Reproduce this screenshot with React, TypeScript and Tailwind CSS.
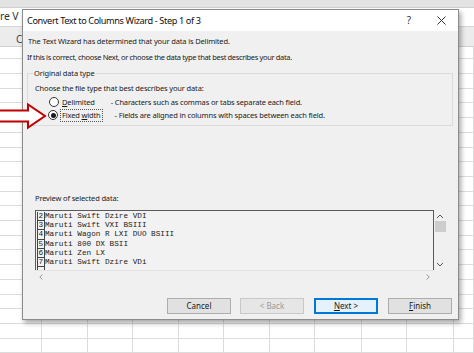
const rows = [
  { n: '2', t: 'Maruti Swift Dzire VDI' },
  { n: '3', t: 'Maruti Swift VXI BSIII' },
  { n: '4', t: 'Maruti Wagon R LXI DUO BSIII' },
  { n: '5', t: 'Maruti 800 DX BSII' },
  { n: '6', t: 'Maruti Zen LX' },
  { n: '7', t: 'Maruti Swift Dzire VDi' },
]

const colWidths = [43, 47, 46, 47, 46, 47, 46, 48, 46, 48, 20]

function Sheet() {
  return (
    <div className="flex flex-col w-[474px] h-[353px] bg-white font-['Noto_Sans',sans-serif]">
      <div className="h-[8px] bg-[#e3e3e3] border-b border-[#d0d0d0]" />
      <div className="h-[19px] flex items-center border-b border-[#d6d6d6]">
        <span className="whitespace-nowrap text-[10.5px] tracking-[-0.2px] text-[#333]">re V</span>
      </div>
      <div className="h-[20px] bg-[#ececec] border-b border-[#d0d0d0] flex items-end pl-[16px] text-[10px] leading-[13px] text-[#444]">C</div>
      <div className="flex-1 flex bg-[repeating-linear-gradient(to_bottom,transparent_0px,transparent_11.4px,#dcdcdc_11.4px,#dcdcdc_12.4px,transparent_12.4px,transparent_14.7px)]">
        {colWidths.map((w, i) => (
          <div key={i} className="h-full border-r border-[#dcdcdc]" style={{ width: w }} />
        ))}
      </div>
    </div>
  )
}

function Radio({ checked }: { checked?: boolean }) {
  return (
    <span className="w-[10px] h-[10px] rounded-full border border-[#333] bg-white flex items-center justify-center shrink-0">
      {checked && <span className="w-[5px] h-[5px] rounded-full bg-[#1a1a1a]" />}
    </span>
  )
}

function Btn({ children, cls }: { children: React.ReactNode; cls: string }) {
  return (
    <div className={`w-[64px] h-[16px] flex items-center justify-center text-[8px] ${cls}`}>{children}</div>
  )
}

function Dialog() {
  return (
    <div className="absolute left-[22px] top-[9px] w-[437px] h-[311px] border border-[#8c8c8c] bg-[#f0f0f0] shadow-[2px_3px_5px_rgba(0,0,0,0.35)] flex flex-col font-['Noto_Sans',sans-serif] text-[#1a1a1a]">
      <div className="h-[21px] bg-white flex items-center pl-[4px] pr-[10px]">
        <span className="text-[9.2px] tracking-[-0.4px] text-[#111]">Convert Text to Columns Wizard - Step 1 of 3</span>
        <span className="ml-auto text-[10px] text-[#333] mr-[26px]">?</span>
        <svg width="9" height="9" viewBox="0 0 9 9" className="mr-[2px]">
          <path d="M0.5 0.5 L8.5 8.5 M8.5 0.5 L0.5 8.5" stroke="#333" strokeWidth="1" />
        </svg>
      </div>
      <div className="flex flex-col pl-[4px] text-[7.5px] leading-[12px] tracking-[-0.15px]">
        <div className="mt-[4px] pl-[1px]">The Text Wizard has determined that your data is Delimited.</div>
        <div className="mt-[4px] tracking-[-0.35px]">If this is correct, choose Next, or choose the data type that best describes your data.</div>
        <div className="mt-[10px] w-[426px] h-[53px] border border-[#dcdcdc] flex flex-col">
          <div className="-mt-[7px] ml-[5px] px-[1px] bg-[#f0f0f0] self-start">Original data type</div>
          <div className="mt-[3px] ml-[7px]">Choose the file type that best describes your data:</div>
          <div className="mt-[1px] ml-[21px] flex items-center h-[13px] whitespace-nowrap">
            <Radio />
            <span className="ml-[3px]"><u>D</u>elimited</span>
            <span className="ml-[16px]">- Characters such as commas or tabs separate each field.</span>
          </div>
          <div className="ml-[20px] flex items-center h-[14px] whitespace-nowrap">
            <Radio checked />
            <span className="ml-[2px] px-[1px] border border-dotted border-[#555] leading-[11px]">Fixed <u>w</u>idth</span>
            <span className="ml-[12px]">- Fields are aligned in columns with spaces between each field.</span>
          </div>
        </div>
        <div className="mt-[66px] ml-[8px]">Preview of selected data:</div>
        <div className="mt-[6px] ml-[8px] w-[411px] h-[72px] flex flex-col">
          <div className="flex h-[60px]">
            <div className="w-[399px] border-t border-l border-r border-[#5a5a5a] bg-[#f2f2f2] flex pt-[1px] font-['Liberation_Mono',monospace] text-[7.7px] leading-[9.2px] tracking-normal text-[#222] overflow-hidden">
              <div className="ml-[1px] w-[8px] border-l border-r border-[#444] flex flex-col items-end">
                {rows.map((r) => (
                  <span key={r.n} className="pr-[1px] border-b border-[#444] h-[9.2px] leading-[8.6px]">{r.n}</span>
                ))}
              </div>
              <div className="flex flex-col">
                {rows.map((r) => (
                  <span key={r.n} className="whitespace-pre">{r.t}</span>
                ))}
              </div>
            </div>
            <div className="w-[12px] flex flex-col items-center">
              <svg width="8" height="5" viewBox="0 0 8 5" className="mt-[4px]">
                <path d="M1 4 L4 1 L7 4" stroke="#555" strokeWidth="1" fill="none" />
              </svg>
              <div className="mt-[2px] w-[11px] h-[11px] bg-[#cdcdcd]" />
              <svg width="8" height="5" viewBox="0 0 8 5" className="mt-auto mb-[3px]">
                <path d="M1 1 L4 4 L7 1" stroke="#555" strokeWidth="1" fill="none" />
              </svg>
            </div>
          </div>
          <div className="w-[399px] h-[12px] border-t border-[#e2e2e2] bg-[#f0f0f0] flex items-center justify-between px-[4px]">
            <svg width="4" height="6" viewBox="0 0 4 6"><path d="M3.5 0.5 L0.8 3 L3.5 5.5" stroke="#999" fill="none" /></svg>
            <svg width="4" height="6" viewBox="0 0 4 6"><path d="M0.5 0.5 L3.2 3 L0.5 5.5" stroke="#999" fill="none" /></svg>
          </div>
        </div>
        <div className="mt-[16px] flex gap-[10px] pl-[140px] tracking-normal">
          <Btn cls="border border-[#adadad] bg-[#e1e1e1]">Cancel</Btn>
          <Btn cls="border border-[#c8c8c8] bg-[#e6e6e6] text-[#9a9a9a] ml-[-1px]">&lt; Back</Btn>
          <Btn cls="border-2 border-[#0078d7] bg-[#e5f1fb]"><span><u>N</u>ext &gt;</span></Btn>
          <Btn cls="border border-[#adadad] bg-[#e1e1e1]"><span><u>F</u>inish</span></Btn>
        </div>
      </div>
    </div>
  )
}

function Arrow() {
  return (
    <svg className="absolute left-0 top-[103px]" width="48" height="27" viewBox="0 0 48 27">
      <path d="M-2 7.5 L28 7.5 L28 1.5 L45 13 L28 24.5 L28 18.5 L-2 18.5 Z" fill="white" stroke="#c00000" strokeWidth="2" strokeLinejoin="miter" />
    </svg>
  )
}

export default function App() {
  return (
    <div className="relative w-[474px] h-[353px] overflow-hidden">
      <Sheet />
      <Dialog />
      <Arrow />
    </div>
  )
}
